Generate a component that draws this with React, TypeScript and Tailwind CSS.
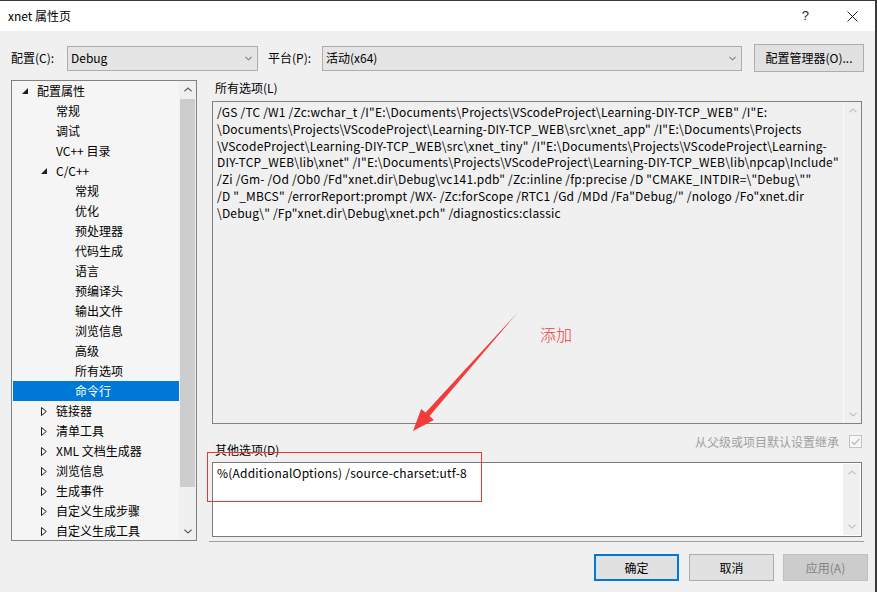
import React from "react";

const FONT = "font-['Noto_Sans_CJK_SC','Noto_Sans',sans-serif]";

type Node = { l: number; t: string; e?: "open" | "closed"; sel?: boolean };

const tree: Node[] = [
    { l: 0, t: "配置属性", e: "open" },
    { l: 1, t: "常规" },
    { l: 1, t: "调试" },
    { l: 1, t: "VC++ 目录" },
    { l: 1, t: "C/C++", e: "open" },
    { l: 2, t: "常规" },
    { l: 2, t: "优化" },
    { l: 2, t: "预处理器" },
    { l: 2, t: "代码生成" },
    { l: 2, t: "语言" },
    { l: 2, t: "预编译头" },
    { l: 2, t: "输出文件" },
    { l: 2, t: "浏览信息" },
    { l: 2, t: "高级" },
    { l: 2, t: "所有选项" },
    { l: 2, t: "命令行", sel: true },
    { l: 1, t: "链接器", e: "closed" },
    { l: 1, t: "清单工具", e: "closed" },
    { l: 1, t: "XML 文档生成器", e: "closed" },
    { l: 1, t: "浏览信息", e: "closed" },
    { l: 1, t: "生成事件", e: "closed" },
    { l: 1, t: "自定义生成步骤", e: "closed" },
    { l: 1, t: "自定义生成工具", e: "closed" },
];

const allOptions = [
    '/GS /TC /W1 /Zc:wchar_t /I"E:\\Documents\\Projects\\VScodeProject\\Learning-DIY-TCP_WEB" /I"E:',
    '\\Documents\\Projects\\VScodeProject\\Learning-DIY-TCP_WEB\\src\\xnet_app" /I"E:\\Documents\\Projects',
    '\\VScodeProject\\Learning-DIY-TCP_WEB\\src\\xnet_tiny" /I"E:\\Documents\\Projects\\VScodeProject\\Learning-',
    'DIY-TCP_WEB\\lib\\xnet" /I"E:\\Documents\\Projects\\VScodeProject\\Learning-DIY-TCP_WEB\\lib\\npcap\\Include"',
    '/Zi /Gm- /Od /Ob0 /Fd"xnet.dir\\Debug\\vc141.pdb" /Zc:inline /fp:precise /D "CMAKE_INTDIR=\\"Debug\\""',
    '/D "_MBCS" /errorReport:prompt /WX- /Zc:forScope /RTC1 /Gd /MDd /Fa"Debug/" /nologo /Fo"xnet.dir',
    '\\Debug\\" /Fp"xnet.dir\\Debug\\xnet.pch" /diagnostics:classic',
];

function Chevron({ up, color, w = 9 }: { up?: boolean; color: string; w?: number }) {
    return (
        <svg width={w} height="5" viewBox="0 0 9 5">
            <path
                d={up ? "M0.5 4.5 L4.5 0.8 L8.5 4.5" : "M0.5 0.5 L4.5 4.2 L8.5 0.5"}
                fill="none"
                stroke={color}
                strokeWidth="1.3"
            />
        </svg>
    );
}

function Combo({ value, width }: { value: string; width: string }) {
    return (
        <div className={`${width} h-[25px] border border-[#adadad] bg-[#e5e5e5] flex items-center justify-between pl-[3px] pr-[5px]`}>
            <span>{value}</span>
            <Chevron color="#7a7a7a" w={7} />
        </div>
    );
}

function Expander({ e }: { e?: "open" | "closed" }) {
    if (e === "open")
        return (
            <svg width="6" height="6" viewBox="0 0 6 6">
                <polygon points="6,0 6,6 0,6" fill="#1e1e1e" />
            </svg>
        );
    if (e === "closed")
        return (
            <svg width="6" height="9" viewBox="0 0 6 9">
                <polygon points="0.5,0.5 5.3,4.5 0.5,8.5" fill="none" stroke="#1e1e1e" strokeWidth="1" />
            </svg>
        );
    return null;
}

function ScrollTrack({ dim, children }: { dim?: boolean; children?: React.ReactNode }) {
    const c = dim ? "#c2c2c2" : "#606060";
    return (
        <div className="w-[17px] h-full flex flex-col items-center bg-[#f0f0f0]">
            <div className="h-[17px] w-full flex items-center justify-center shrink-0">
                <Chevron up color={c} w={8} />
            </div>
            <div className="flex-1 w-full flex flex-col">{children}</div>
            <div className="h-[17px] w-full flex items-center justify-center shrink-0">
                <Chevron color={c} w={8} />
            </div>
        </div>
    );
}

export default function App() {
    return (
        <div className={`relative w-[877px] h-[592px] overflow-hidden bg-[#f0f0f0] border-t border-r-2 border-[#3a3a3a] text-[12px] text-black ${FONT}`}>
            {/* title bar */}
            <div className="h-[30px] bg-white flex items-center justify-between">
                <span className="pl-[8px]">xnet 属性页</span>
                <div className="flex items-center">
                    <span className="text-[13px] text-[#222] mr-[38px] font-['Liberation_Sans',sans-serif]">?</span>
                    <svg width="11" height="11" viewBox="0 0 11 11" className="mr-[17px]">
                        <path d="M0.5 0.5 L10.5 10.5 M10.5 0.5 L0.5 10.5" stroke="#222" strokeWidth="1" />
                    </svg>
                </div>
            </div>

            {/* config row */}
            <div className="mt-[13px] ml-[11px] flex items-center h-[28px]">
                <span className="w-[56px]">配置(C):</span>
                <Combo value="Debug" width="w-[191px]" />
                <span className="ml-[10px] w-[54px]">平台(P):</span>
                <Combo value="活动(x64)" width="w-[420px]" />
                <button className="ml-[12px] w-[110px] h-[28px] border border-[#adadad] bg-[#e1e1e1] flex items-center justify-center">
                    配置管理器(O)...
                </button>
            </div>

            {/* main */}
            <div className="mt-[8px] ml-[11px] flex items-start gap-[15px]">
                {/* tree */}
                <div className="w-[186px] h-[461px] border border-[#828282] bg-[#f5f5f5] flex">
                    <div className="flex-1 overflow-hidden">
                        {tree.map((n, i) => (
                            <div
                                key={i}
                                className={`h-[20px] ml-[1px] flex items-center whitespace-nowrap ${n.sel ? "bg-[#0078d7] text-white" : ""}`}
                                style={{ paddingLeft: 9 + 19 * n.l }}
                            >
                                <span className="w-[15px] flex items-center">
                                    <Expander e={n.e} />
                                </span>
                                <span>{n.t}</span>
                            </div>
                        ))}
                    </div>
                    <ScrollTrack>
                        <div className="h-[388px] mt-[1px] mx-[1px] bg-[#cdcdcd]" />
                    </ScrollTrack>
                </div>

                {/* right column */}
                <div className="w-[650px] flex flex-col">
                    <div className="h-[21px] leading-[16px] pl-[3px]">所有选项(L)</div>
                    <div className="h-[323px] border border-[#828282] bg-[#f0f0f0] flex">
                        <div className="flex-1 pl-[4px] pt-[2px] leading-[16.8px] tracking-[0.2px] whitespace-pre overflow-hidden">
                            {allOptions.map((l, i) => (
                                <div key={i}>{l}</div>
                            ))}
                        </div>
                        <div className="border-l border-[#fafafa] h-full">
                            <ScrollTrack dim />
                        </div>
                    </div>

                    <div className="h-[38px] flex justify-between">
                        <span className="self-end pb-[4px] pl-[3px] leading-[16px]">其他选项(D)</span>
                        <div className="self-start mt-[11px] flex items-center gap-[10px]">
                            <span className="text-[#a0a0a0] leading-[13px]">从父级或项目默认设置继承</span>
                            <div className="w-[13px] h-[13px] border border-[#c4c4c4] bg-[#f7f7f7] flex items-center justify-center">
                                <svg width="9" height="8" viewBox="0 0 9 8">
                                    <path d="M0.8 4 L3.3 6.5 L8.3 1" fill="none" stroke="#b8b8b8" strokeWidth="1.2" />
                                </svg>
                            </div>
                        </div>
                    </div>

                    <div className="h-[75px] border border-[#7a7a7a] bg-white flex">
                        <div className="flex-1 pl-[4px] pt-[2px] leading-[16.8px] tracking-[0.2px] whitespace-pre">
                            %(AdditionalOptions) /source-charset:utf-8
                        </div>
                        <div className="py-[1px] pr-[1px] h-full">
                            <ScrollTrack dim />
                        </div>
                    </div>
                    <div className="mt-[4px] -ml-[3px] w-[655px] h-[1px] bg-[#a0a0a0]" />
                </div>
            </div>

            {/* buttons */}
            <div className="mt-[12px] flex justify-end pr-[7px]">
                <button className="w-[85px] h-[27px] border-2 border-[#0078d7] bg-[#e1e1e1] flex items-center justify-center">
                    确定
                </button>
                <button className="ml-[10px] w-[85px] h-[27px] border border-[#adadad] bg-[#e1e1e1] flex items-center justify-center">
                    取消
                </button>
                <button className="ml-[9px] w-[85px] h-[27px] border border-[#bfbfbf] bg-[#cccccc] text-[#838383] flex items-center justify-center">
                    应用(A)
                </button>
            </div>

            {/* annotations */}
            <svg width="877" height="592" className="absolute left-0 top-[-1px] pointer-events-none">
                <polygon
                    points="518,312 429.6,416 433.8,420 413,431 421.2,409 425.6,412.6"
                    fill="#f23b3b"
                />
            </svg>
            <div className="absolute left-[540px] top-[321px] text-[16px] text-[#ee3b3b] font-light">添加</div>
            <div className="absolute left-[207px] top-[451px] w-[275px] h-[50px] border-[1.5px] border-[#f03434]" />
        </div>
    );
}
